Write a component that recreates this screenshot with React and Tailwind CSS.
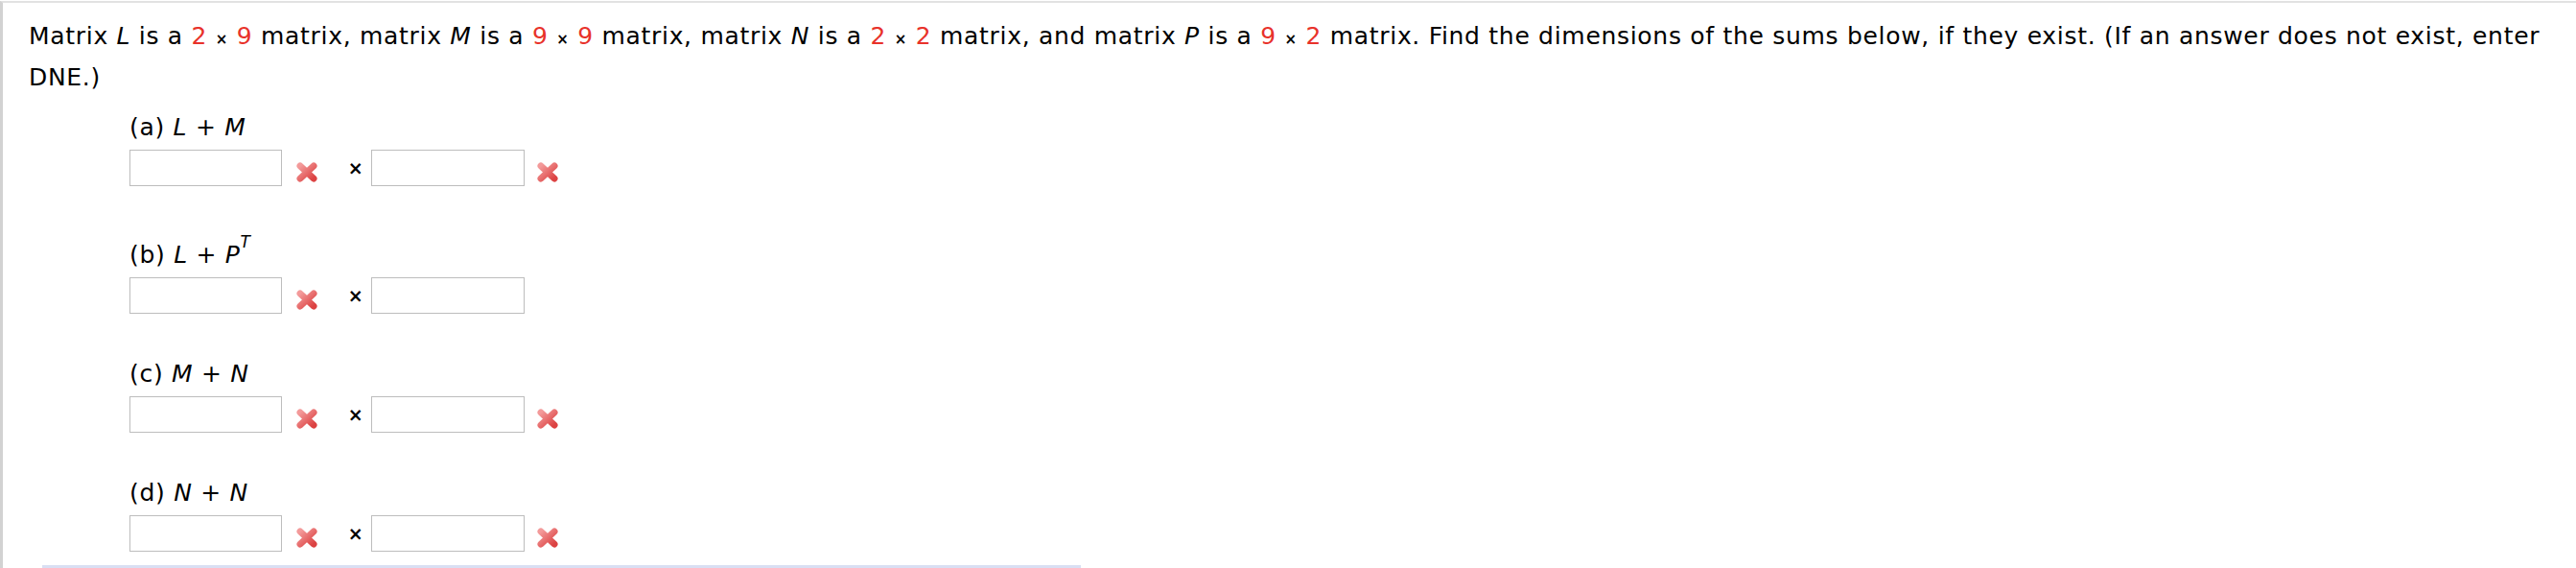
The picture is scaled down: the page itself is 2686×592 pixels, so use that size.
const questions = [
  { key: "a", left: "L", right: "M", marks: [true, true] },
  { key: "b", left: "L", right: "P", sup: "T", marks: [true, false] },
  { key: "c", left: "M", right: "N", marks: [true, true] },
  { key: "d", left: "N", right: "N", marks: [true, true] },
];

const Num = ({ children }) => <span className="text-[#e8322a]">{children}</span>;

const Times = () => <span className="text-[15px] font-bold">×</span>;

const WrongMark = () => (
  <svg width="26" height="25" viewBox="0 0 26 25" className="shrink-0">
    <defs>
      <linearGradient id="wrong-grad" x1="0" y1="0" x2="1" y2="1">
        <stop offset="0" stopColor="#f39a9a" />
        <stop offset="1" stopColor="#dc4242" />
      </linearGradient>
    </defs>
    <path
      d="M6 6L20 19M20 6L6 19"
      stroke="url(#wrong-grad)"
      strokeWidth="7"
      strokeLinecap="round"
      fill="none"
    />
  </svg>
);

const Question = ({ q, first }) => {
  return (
    <div className={first ? "" : "mt-[43px]"}>
      <div className={"text-[25px] leading-[39px] " + (q.sup ? "pt-[9px]" : "")}>
        ({q.key}) <i>{q.left}</i> + <i>{q.right}</i>
        {q.sup && (
          <sup className="relative -top-[16px] align-baseline text-[17px] leading-none italic">
            {q.sup}
          </sup>
        )}
      </div>
      <div className="mt-1 flex items-end">
        <input className="h-[38px] w-[159px] border border-[#bdbdbd] bg-white" />
        <span className="mb-[2px] ml-[13px]">
          <WrongMark />
        </span>
        <span className="mb-[9px] ml-[32px] flex w-[12px] justify-center text-[19px] font-bold leading-none">
          ×
        </span>
        <input className="ml-[10px] h-[38px] w-[160px] border border-[#bdbdbd] bg-white" />
        {q.marks[1] && (
          <span className="mb-[2px] ml-[11px]">
            <WrongMark />
          </span>
        )}
      </div>
    </div>
  );
};

export default function App() {
  return (
    <div className="min-h-screen bg-white pt-px font-['DejaVu_Sans',Verdana,sans-serif] tracking-[0.7px] text-black">
      <div className="border-l-[3px] border-t-2 border-l-[#d2d2d2] border-t-[#e2e2e2] pl-[27px] pt-[15px]">
        <p className="whitespace-nowrap text-[25px] leading-[39px]">
          Matrix <i>L</i> is a <Num>2</Num> <Times /> <Num>9</Num> matrix, matrix <i>M</i> is a{" "}
          <Num>9</Num> <Times /> <Num>9</Num> matrix, matrix <i>N</i> is a <Num>2</Num> <Times />{" "}
          <Num>2</Num> matrix, and matrix <i>P</i> is a <Num>9</Num> <Times /> <Num>2</Num> matrix.
          Find the dimensions of the sums below, if they exist. (If an answer does not exist, enter
          <br />
          DNE.)
        </p>
        <div className="ml-[105px] mt-[13px]">
          {questions.map((q, i) => (
            <Question key={q.key} q={q} first={i === 0} />
          ))}
        </div>
        <div className="mt-[14px] flex">
          <div className="ml-[14px] h-[20px] w-[1083px] bg-[#d9dff3]" />
          <div className="ml-auto mr-[36px] mt-[3px] h-[20px] w-[107px] border border-[#b5b5b5] bg-white" />
        </div>
      </div>
    </div>
  );
}
